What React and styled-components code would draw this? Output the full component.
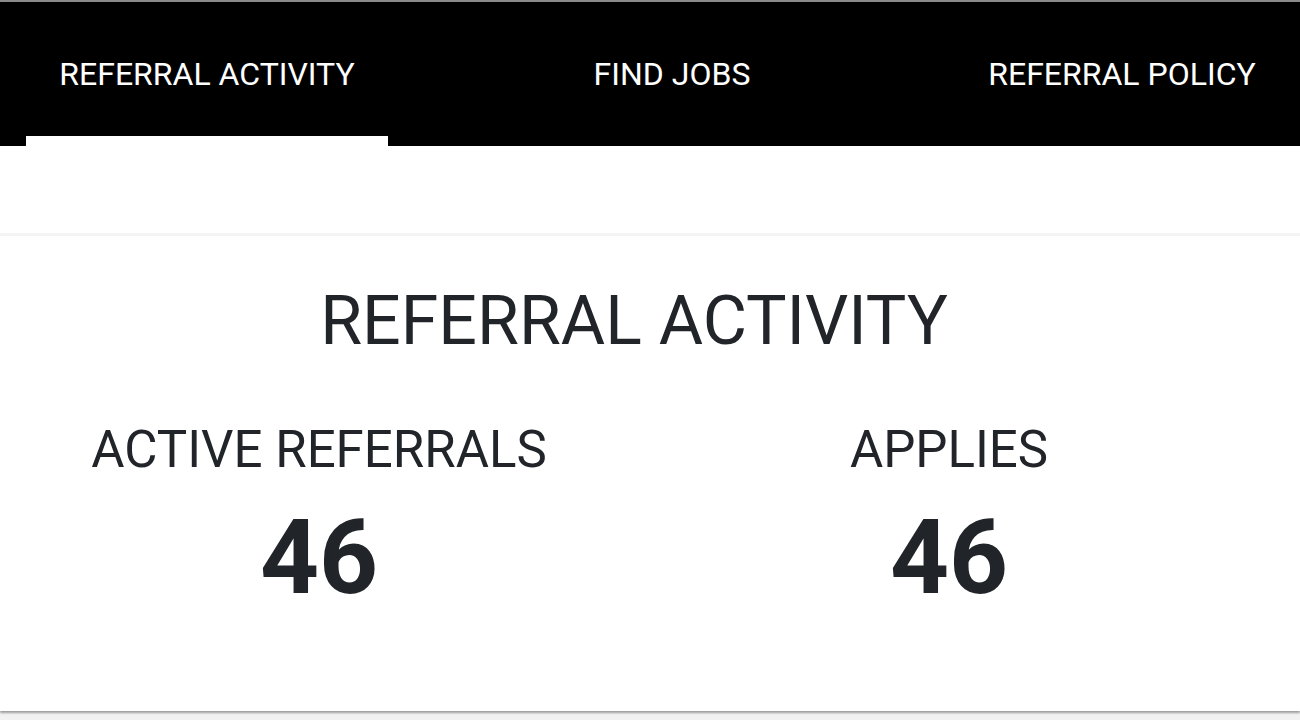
import React from "react";
import styled, { createGlobalStyle } from "styled-components";

const GlobalStyle = createGlobalStyle`
  html, body {
    margin: 0;
    padding: 0;
    background: #f1f1f1;
    font-family: Roboto, "Liberation Sans", sans-serif;
  }
`;

const Page = styled.div`
  width: 1300px;
  height: 720px;
  overflow: hidden;
  border-top: 2px solid #8a8a8a;
  box-sizing: border-box;
`;

const Nav = styled.nav`
  display: flex;
  height: 144px;
  padding-left: 26px;
  background: #000;
`;

const Tab = styled.a`
  position: relative;
  display: flex;
  align-items: center;
  justify-content: center;
  flex: 0 0 362px;
  margin-left: ${(p) => p.$offset || 0}px;
  color: #fff;
  font-size: 32px;
  line-height: 1;
  text-decoration: none;
  white-space: nowrap;
  cursor: pointer;

  &::after {
    content: "";
    position: absolute;
    left: 0;
    right: 0;
    bottom: 0;
    height: 10px;
    background: ${(p) => (p.$active ? "#fff" : "transparent")};
  }
`;

const Main = styled.main`
  background: #fff;
  padding-top: 87px;
`;

const Card = styled.section`
  background: #fff;
  padding: 45px 36px 92px 4px;
  border-top: 3px solid #f4f4f4;
  box-shadow: 0 2px 2px rgba(0, 0, 0, 0.35);
  color: #212529;
`;

const Title = styled.h1`
  margin: 0;
  font-size: 68px;
  font-weight: 400;
  line-height: 1.2;
  text-align: center;
`;

const Stats = styled.div`
  display: grid;
  grid-template-columns: 630px 630px;
  margin-top: 56px;
`;

const Stat = styled.div`
  display: flex;
  flex-direction: column;
  align-items: center;
  gap: 16px;
`;

const Label = styled.div`
  font-size: 51px;
  font-weight: 400;
  line-height: 1.2;
`;

const Count = styled.div`
  font-size: 103px;
  font-weight: 700;
  line-height: 1.2;
`;

const tabs = [
  { label: "REFERRAL ACTIVITY", offset: 0, active: true },
  { label: "FIND JOBS", offset: 103 },
  { label: "REFERRAL POLICY", offset: 88 },
];

const stats = [
  { label: "ACTIVE REFERRALS", value: 46 },
  { label: "APPLIES", value: 46 },
];

export default function App() {
  return (
    <>
      <GlobalStyle />
      <Page>
        <Nav>
          {tabs.map((t) => (
            <Tab key={t.label} $offset={t.offset} $active={t.active}>
              {t.label}
            </Tab>
          ))}
        </Nav>
        <Main>
          <Card>
            <Title>REFERRAL ACTIVITY</Title>
            <Stats>
              {stats.map((s) => (
                <Stat key={s.label}>
                  <Label>{s.label}</Label>
                  <Count>{s.value}</Count>
                </Stat>
              ))}
            </Stats>
          </Card>
        </Main>
      </Page>
    </>
  );
}
